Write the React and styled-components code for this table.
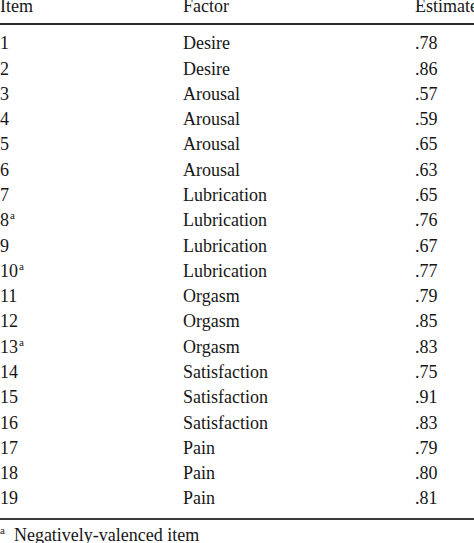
import React from 'react';
import styled, { createGlobalStyle } from 'styled-components';

const GlobalStyle = createGlobalStyle`
  html, body {
    margin: 0;
    padding: 0;
    background: #fff;
  }
  body {
    font-family: "Liberation Serif", "Times New Roman", serif;
    color: #161616;
  }
`;

const Page = styled.div`
  width: 474px;
  height: 543px;
  overflow: hidden;
  background: #fff;
`;

// the screenshot is a crop, the header sits a bit above the top edge
const Table = styled.div`
  margin-top: -4px;
  font-size: 18px;
`;

const Row = styled.div`
  display: grid;
  grid-template-columns: 183px 232px 1fr;
  line-height: ${(p) => (p.head ? '20px' : '25.28px')};
  white-space: nowrap;
`;

const Head = styled.div`
  padding-bottom: 7px;
  border-bottom: 2px solid #2a2a2a;
`;

const Body = styled.div`
  padding: 6.3px 0 6.4px;
  border-bottom: 2px solid #3a3a3a;
`;

const Cell = styled.div`
  padding-left: ${(p) => (p.first ? '0' : '0')};
`;

const Sup = styled.sup`
  font-size: 11px;
  line-height: 0;
  vertical-align: 7px;
  margin-left: 1px;
`;

const Note = styled.div`
  margin-top: 5px;
  line-height: 20px;
  display: flex;
  align-items: baseline;
  gap: 9px;
`;

const NoteMark = styled.span`
  font-size: 11px;
  position: relative;
  top: -7px;
`;

const rows = [
  ['1', 'Desire', '.78'],
  ['2', 'Desire', '.86'],
  ['3', 'Arousal', '.57'],
  ['4', 'Arousal', '.59'],
  ['5', 'Arousal', '.65'],
  ['6', 'Arousal', '.63'],
  ['7', 'Lubrication', '.65'],
  ['8', 'Lubrication', '.76', true],
  ['9', 'Lubrication', '.67'],
  ['10', 'Lubrication', '.77', true],
  ['11', 'Orgasm', '.79'],
  ['12', 'Orgasm', '.85'],
  ['13', 'Orgasm', '.83', true],
  ['14', 'Satisfaction', '.75'],
  ['15', 'Satisfaction', '.91'],
  ['16', 'Satisfaction', '.83'],
  ['17', 'Pain', '.79'],
  ['18', 'Pain', '.80'],
  ['19', 'Pain', '.81'],
];

export default function App() {
  return (
    <Page>
      <GlobalStyle />
      <Table>
        <Head>
          <Row head>
            <Cell>Item</Cell>
            <Cell>Factor</Cell>
            <Cell>Estimate</Cell>
          </Row>
        </Head>
        <Body>
          {rows.map(([item, factor, est, neg]) => (
            <Row key={item}>
              <Cell>
                {item}
                {neg ? <Sup>a</Sup> : null}
              </Cell>
              <Cell>{factor}</Cell>
              <Cell>{est}</Cell>
            </Row>
          ))}
        </Body>
        <Note>
          <NoteMark>a</NoteMark>
          <span>Negatively-valenced item</span>
        </Note>
      </Table>
    </Page>
  );
}
